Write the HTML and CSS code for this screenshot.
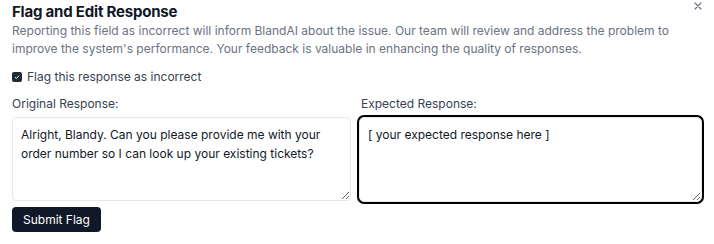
FILE: index.html
```html
<!DOCTYPE html>
<html>
<head>
<meta charset="utf-8">
<link rel="stylesheet" href="styles.css">
</head>
<body>
<div class="dialog">
  <button class="close" aria-label="Close">
    <svg width="8" height="8" viewBox="0 0 8 8"><path d="M1 1L7 7M7 1L1 7" stroke="#6b7280" stroke-width="1.2" stroke-linecap="round"/></svg>
  </button>
  <h2 class="title">Flag and Edit Response</h2>
  <p class="desc">Reporting this field as incorrect will inform BlandAI about the issue. Our team will review and address the problem to improve the system's performance. Your feedback is valuable in enhancing the quality of responses.</p>
  <label class="check">
    <span class="box"><svg width="6" height="6" viewBox="0 0 6 6"><path d="M1 3.2L2.4 4.5L5 1.6" stroke="#fff" stroke-width="1" fill="none"/></svg></span>
    Flag this response as incorrect
  </label>
  <div class="cols">
    <div class="col">
      <div class="label">Original Response:</div>
      <textarea class="ta">Alright, Blandy. Can you please provide me with your order number so I can look up your existing tickets?</textarea>
    </div>
    <div class="col">
      <div class="label right">Expected Response:</div>
      <textarea class="ta focus">[ your expected response here ]</textarea>
    </div>
  </div>
  <button class="submit">Submit Flag</button>
</div>
</body>
</html>
```
FILE: styles.css
```css
html, body { margin: 0; padding: 0; background: #fff; }
body { font-family: Inter, "Noto Sans", sans-serif; color: #111827; }
.dialog { position: relative; padding: 2px 12px 0 12px; width: 714px; box-sizing: border-box; }
.close { position: absolute; top: 0; right: 10px; border: 0; background: none; padding: 0; width: 12px; height: 12px; display: flex; align-items: center; justify-content: center; }
.title { margin: 0; font-size: 15px; font-weight: 700; line-height: 20px; color: #111827; letter-spacing: -0.2px; }
.desc { margin: 0; font-size: 12px; line-height: 18px; color: #6b7280; }
.check { display: flex; align-items: center; gap: 5px; font-size: 12px; line-height: 16px; color: #374151; margin-top: 11px; }
.box { width: 10px; height: 10px; background: #1f2937; border-radius: 2px; display: flex; align-items: center; justify-content: center; }
.cols { display: grid; grid-template-columns: 339px 343px; gap: 8px; margin-top: 11px; }
.label { font-size: 12px; line-height: 16px; color: #374151; margin-bottom: 5px; }
.label.right { padding-left: 2px; }
.ta { display: block; width: 100%; box-sizing: border-box; height: 84px; border: 1px solid #e5e7eb; border-radius: 4px; padding: 7px 8px; font-family: Inter, "Noto Sans", sans-serif; font-size: 12px; line-height: 19px; color: #111827; resize: vertical; margin: 0; }
.ta.focus { height: 85px; outline: none; box-shadow: 0 0 0 2px #000; border-radius: 5px; }
.submit { margin-top: 5px; background: #111827; color: #fff; border: 0; border-radius: 4px; height: 25px; padding: 0 11px; font-family: Inter, "Noto Sans", sans-serif; font-size: 12px; }
```
